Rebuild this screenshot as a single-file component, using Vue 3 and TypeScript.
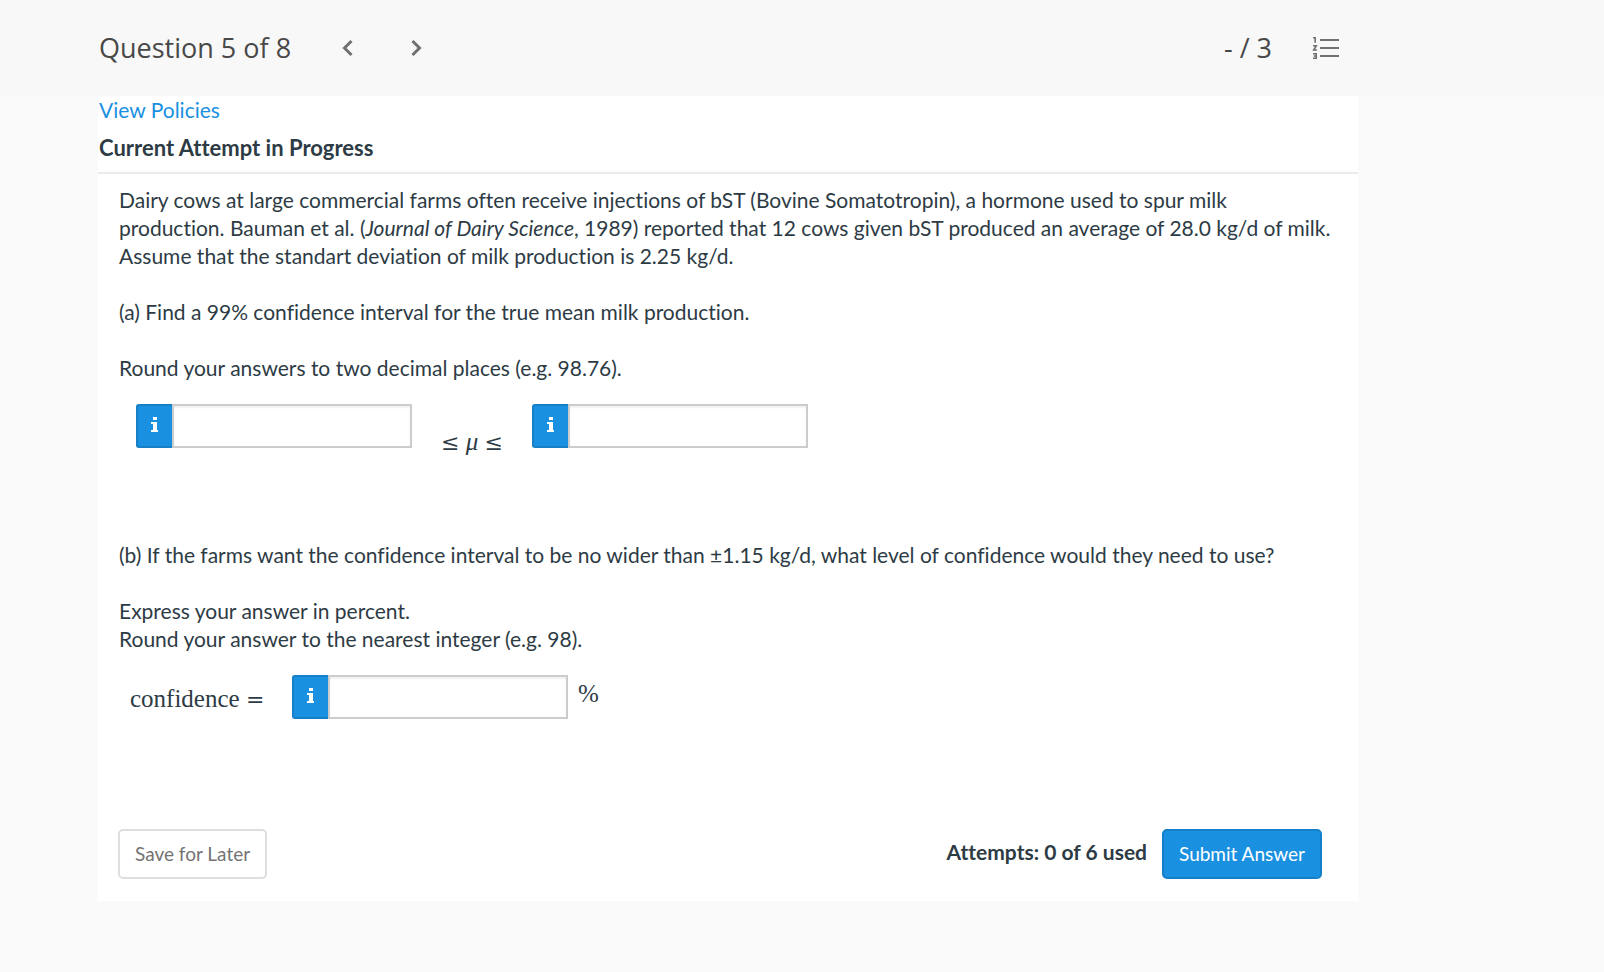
<script setup lang="ts">
import { ref } from 'vue'

const lower = ref('')
const upper = ref('')
const confidence = ref('')
</script>

<template>
  <div class="page">
    <header class="bar">
      <h1 class="heading">Question 5 of 8</h1>
      <button class="nav" type="button" aria-label="Previous question">
        <svg width="12" height="18" viewBox="0 0 12 18"><path d="M9.5 2 2.5 9l7 7" /></svg>
      </button>
      <button class="nav next" type="button" aria-label="Next question">
        <svg width="12" height="18" viewBox="0 0 12 18"><path d="m2.5 2 7 7-7 7" /></svg>
      </button>
      <span class="score">- / 3</span>
      <button class="nav list" type="button" aria-label="Question list">
        <svg width="28" height="24" viewBox="0 0 28 24">
          <path class="rule" d="M8 4h19M8 12h19M8 20h19" />
          <path class="num" d="M1 1.7h2.2v5.1M1 9.7h3.3L1.7 14h3.3M1 17.7h3.2v4.6H1M1.7 20H4" />
        </svg>
      </button>
    </header>

    <main class="card">
      <div class="intro">
        <a class="policies" href="#">View Policies</a>
        <h2 class="status">Current Attempt in Progress</h2>
      </div>

      <section class="question">
        <p>
          Dairy cows at large commercial farms often receive injections of bST (Bovine
          Somatotropin), a hormone used to spur milk production. Bauman et al.
          (<em>Journal of Dairy Science</em>, 1989) reported that 12 cows given bST produced an
          average of 28.0 kg/d of milk. Assume that the standart deviation of milk production is
          2.25 kg/d.
        </p>
        <p>(a) Find a 99% confidence interval for the true mean milk production.</p>
        <p>Round your answers to two decimal places (e.g. 98.76).</p>

        <div class="row interval">
          <div class="field">
            <button class="info" type="button" aria-label="Input information">
              <svg width="8" height="18" viewBox="0 0 8 18"><path d="M2 0h4v3H2zM1 5h5v8h1v2H0v-2h2V7H0V5z" /></svg>
            </button>
            <input v-model="lower" type="text" aria-label="Lower limit" />
          </div>
          <span class="math between"><span class="op">≤</span> <i>μ</i> <span class="op">≤</span></span>
          <div class="field">
            <button class="info" type="button" aria-label="Input information">
              <svg width="8" height="18" viewBox="0 0 8 18"><path d="M2 0h4v3H2zM1 5h5v8h1v2H0v-2h2V7H0V5z" /></svg>
            </button>
            <input v-model="upper" type="text" aria-label="Upper limit" />
          </div>
        </div>

        <p>
          (b) If the farms want the confidence interval to be no wider than ±1.15 kg/d, what level
          of confidence would they need to use?
        </p>
        <p>Express your answer in percent.<br />Round your answer to the nearest integer (e.g. 98).</p>

        <div class="row percent">
          <label class="math" for="confidence">confidence <span class="op">=</span></label>
          <div class="field">
            <button class="info" type="button" aria-label="Input information">
              <svg width="8" height="18" viewBox="0 0 8 18"><path d="M2 0h4v3H2zM1 5h5v8h1v2H0v-2h2V7H0V5z" /></svg>
            </button>
            <input id="confidence" v-model="confidence" type="text" />
          </div>
          <span class="math unit">%</span>
        </div>
      </section>

      <footer class="actions">
        <button class="btn save" type="button">Save for Later</button>
        <strong class="attempts">Attempts: 0 of 6 used</strong>
        <button class="btn submit" type="button">Submit Answer</button>
      </footer>
    </main>
  </div>
</template>

<style>
body {
  background: #fafafa;
}
</style>

<style scoped>
.page {
  font-family: Lato, 'Open Sans', sans-serif;
  font-size: 21px;
  font-variant-ligatures: none;
  line-height: 28px;
  color: #2d3b45;
}
.page * {
  box-sizing: border-box;
}
button {
  font: inherit;
  cursor: pointer;
}
.bar {
  display: flex;
  align-items: center;
  height: 96px;
  padding: 0 264px 0 99px;
  background: #f8f8f8;
  color: #484848;
  font-family: 'Open Sans', sans-serif;
}
.heading {
  margin: 0 45px 0 0;
  font-size: 27px;
  font-weight: 400;
  line-height: 36px;
}
.nav {
  display: flex;
  padding: 6px;
  border: 0;
  background: none;
}
.nav path {
  fill: none;
  stroke: #707070;
  stroke-width: 3;
}
.nav .rule {
  stroke-width: 2;
}
.nav .num {
  stroke-width: 1.6;
}
.next {
  margin-left: 44px;
}
.score {
  margin-left: auto;
  font-size: 27px;
}
.list {
  margin-left: 40px;
  padding: 0;
}
.card {
  margin: 0 246px 0 98px;
  background: #fff;
}
.intro {
  padding: 0 1px 10px;
  border-bottom: 2px solid #ebebeb;
}
.policies {
  display: block;
  color: #1990e0;
  text-decoration: none;
}
.status {
  margin: 10px 0 0;
  font-size: 22px;
  font-weight: 700;
}
.question {
  padding: 12px 22px 0 21px;
}
.question p {
  margin: 0 0 28px;
}
.row {
  display: flex;
  align-items: flex-start;
}
.interval {
  margin: -6px 0 84px 17px;
}
.percent {
  margin: -6px 0 110px 11px;
}
.field {
  display: flex;
  width: 276px;
  height: 44px;
}
.info {
  display: flex;
  align-items: center;
  justify-content: center;
  flex: 0 0 36px;
  padding: 0;
  border: 2px solid #157fc8;
  border-right: 0;
  border-radius: 3px 0 0 3px;
  background: #1990e0;
}
.info path {
  fill: #fff;
}
.field input {
  flex: 1;
  min-width: 0;
  padding: 4px 10px;
  border: 2px solid #ccc;
  border-radius: 0;
  box-shadow: inset 0 2px 2px #f2f2f2;
  font: inherit;
  color: inherit;
}
.math {
  font-family: 'Liberation Serif', serif;
  font-size: 25px;
}
.op {
  font-family: 'DejaVu Serif', serif;
  font-size: 22px;
}
.between {
  width: 120px;
  padding-top: 24px;
  text-align: center;
}
.percent label {
  width: 162px;
  padding-top: 10px;
}
.unit {
  margin-left: 10px;
  padding-top: 5px;
}
.actions {
  display: flex;
  align-items: center;
  padding: 0 36px 22px 20px;
}
.btn {
  height: 50px;
  padding: 0 15px;
  border: 2px solid #dedede;
  border-radius: 5px;
  background: #fff;
  color: #737373;
  font-size: 19px;
}
.attempts {
  margin: 0 15px 4px auto;
}
.submit {
  border-color: #157fc8;
  background: #1990e0;
  color: #fff;
}
</style>
